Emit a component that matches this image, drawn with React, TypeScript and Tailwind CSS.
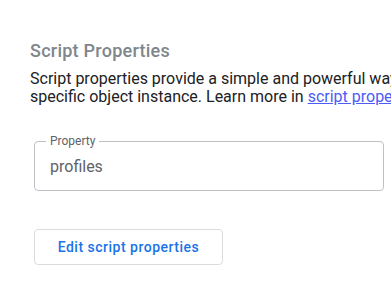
export default function App() {
  return (
    <div className="h-[287px] w-[391px] overflow-hidden bg-white pl-[30px] pt-[40px] font-['Roboto',sans-serif]">
      <h2 className="whitespace-nowrap text-[18px] font-medium leading-[22px] tracking-[0.25px] text-[#80868b]">
        Script Properties
      </h2>
      <p className="mt-[8px] whitespace-nowrap text-[16px] leading-[18px] text-[#202124]">
        Script properties provide a simple and powerful way to store data for a
        <br />
        specific object instance. Learn more in{" "}
        <a className="text-[#4c5cf5] underline">script properties</a>
      </p>
      <div className="relative ml-[4px] mt-[35px] h-[50px] w-[350px] rounded-[4px] border border-[#bdc1c6]">
        <span className="absolute left-[11px] top-[-9px] bg-white px-[4px] text-[12px] leading-[16px] text-[#5f6368]">
          Property
        </span>
        <div className="pl-[15px] pt-[14px] text-[16px] leading-[22px] text-[#5f6368]">
          profiles
        </div>
      </div>
      <button className="ml-[4px] mt-[38px] flex h-[36px] w-[189px] items-center justify-center rounded-[4px] border border-[#dadce0] bg-white text-[14px] font-medium tracking-[0.5px] text-[#1a73e8]">
        Edit script properties
      </button>
    </div>
  );
}
